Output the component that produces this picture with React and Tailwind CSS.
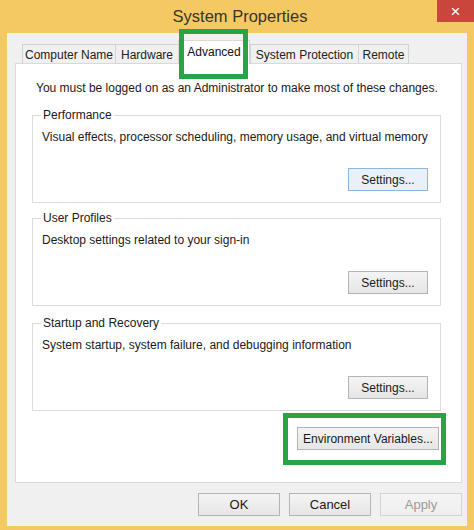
import React from 'react';

const font = { fontFamily: '"Liberation Sans", Arial, sans-serif' };

const tabs = [
  { label: 'Computer Name', w: 'w-[94px]' },
  { label: 'Hardware', w: 'w-[64px]' },
  { label: 'Advanced', w: 'w-[72px]', active: true },
  { label: 'System Protection', w: 'w-[109px]' },
  { label: 'Remote', w: 'w-[51px]' },
];

const groups = [
  { title: 'Performance', text: 'Visual effects, processor scheduling, memory usage, and virtual memory', focus: true },
  { title: 'User Profiles', text: 'Desktop settings related to your sign-in' },
  { title: 'Startup and Recovery', text: 'System startup, system failure, and debugging information' },
];

function Button({ children, className = '', focus, disabled }) {
  return (
    <div
      className={
        'h-[23px] flex items-center justify-center border text-[12px] ' +
        (focus
          ? 'border-[#8cb6e0] bg-[#e8f1fa] text-[#1a1a1a] '
          : 'border-[#b4b4b4] bg-gradient-to-b from-[#f4f4f4] to-[#e6e6e6] text-[#1a1a1a] ') +
        (disabled ? 'text-[#9a9a9a] border-[#d4d4d4] from-[#f3f3f3] to-[#efefef] ' : '') +
        className
      }
    >
      {children}
    </div>
  );
}

function Group({ title, text, focus, className }) {
  return (
    <div className={'relative border border-[#dcdcdc] ml-[16px] mr-[20px] px-[9px] pt-[13px] pb-[11px] ' + className}>
      {/* label sits over the top border */}
      <span className="absolute left-[8px] -top-[8px] bg-white px-[2px] leading-[15px] text-[12px] text-[#1a1a1a]">
        {title}
      </span>
      <p className="leading-[16px] text-[12px] text-[#1a1a1a]">{text}</p>
      <div className="flex justify-end mt-[23px] mr-[3px]">
        <Button focus={focus} className="w-[80px]">Settings...</Button>
      </div>
    </div>
  );
}

export default function App() {
  return (
    <div className="relative w-[474px] h-[530px] bg-[#f5c962] flex flex-col overflow-hidden" style={font}>
      {/* Title bar */}
      <div className="h-[33px] flex flex-shrink-0">
        <div className="w-[37px]" />
        <div className="flex-1 flex items-center justify-center pl-[6px] text-[16.5px] text-[#3b3327]">
          System Properties
        </div>
        <div className="w-[37px] h-[22px] bg-[#c9463d] flex items-center justify-center text-white text-[17px] leading-none">
          ×
        </div>
      </div>

      {/* Client area */}
      <div className="flex-1 mx-[7px] mb-[4px] bg-[#f0f0f0] pt-[7px] flex flex-col">
        {/* Tabs */}
        <div className="h-[23px] ml-[15px] flex items-end">
          {tabs.map((t) =>
            t.active ? (
              <div
                key={t.label}
                className={`${t.w} h-[24px] -mb-px relative z-10 bg-white border border-b-0 border-[#d9d9d9] flex items-center justify-center text-[12px] text-[#111] pb-[2px]`}
              >
                {t.label}
              </div>
            ) : (
              <div
                key={t.label}
                className={`${t.w} h-[19px] bg-[#f0f0f0] border border-b-0 border-[#d3d3d3] -mr-px flex items-center justify-center text-[12px] text-[#222] pt-px`}
              >
                {t.label}
              </div>
            )
          )}
        </div>

        {/* Panel */}
        <div className="ml-[8px] mr-[5px] h-[420px] bg-white border border-[#d9d9d9] pt-[16px] flex flex-col">
          <p className="ml-[20px] leading-[16px] text-[12px] text-[#1a1a1a]">
            You must be logged on as an Administrator to make most of these changes.
          </p>
          <Group {...groups[0]} className="mt-[19px]" />
          <Group {...groups[1]} className="mt-[15px]" />
          <Group {...groups[2]} className="mt-[17px]" />
          <div className="flex justify-end mt-[16px] mr-[22px]">
            <Button className="w-[142px]">Environment Variables...</Button>
          </div>
        </div>

        {/* Dialog buttons */}
        <div className="flex justify-end gap-[9px] mt-[10px] mr-[5px]">
          <Button className="w-[82px] text-[13px]">OK</Button>
          <Button className="w-[82px] text-[13px]">Cancel</Button>
          <Button className="w-[82px] text-[13px]" disabled>Apply</Button>
        </div>
      </div>

      {/* Green highlight boxes drawn over the dialog */}
      <div className="absolute left-[179px] top-[29px] w-[69px] h-[50px] border-[5px] border-[#27a546] pointer-events-none z-20" />
      <div className="absolute left-[283px] top-[413px] w-[163px] h-[52px] border-[5px] border-[#27a546] pointer-events-none z-20" />
    </div>
  );
}
